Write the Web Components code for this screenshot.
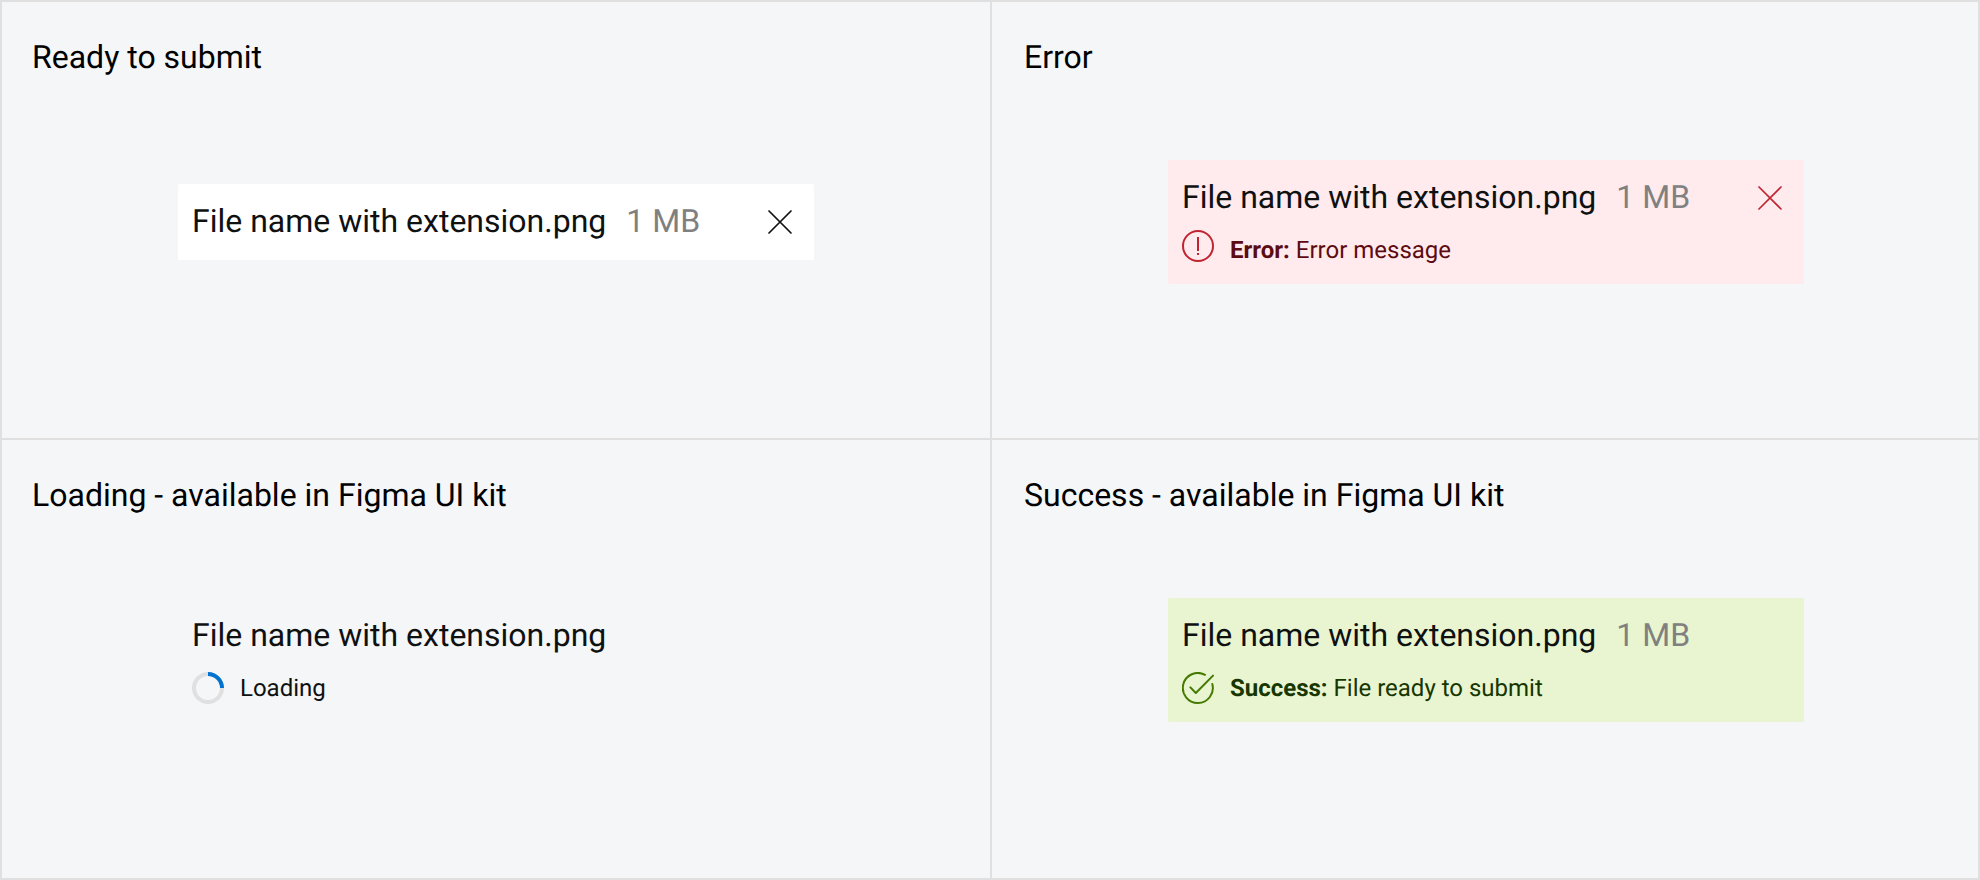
<!DOCTYPE html>
<html lang="en">
<head>
<meta charset="utf-8">
<title>File item states</title>
<style>
  body { margin: 0; font-family: Roboto, sans-serif; text-rendering: geometricPrecision; background: #f4f6f8; color: #000; }
</style>
</head>
<body>
<state-board>
  <state-cell heading="Ready to submit">
    <file-item state="ready" name="File name with extension.png" size="1 MB" removable></file-item>
  </state-cell>
  <state-cell heading="Error">
    <file-item state="error" name="File name with extension.png" size="1 MB" removable>
      <status-icon slot="icon" kind="error"></status-icon><b slot="message">Error:</b><span slot="message"> Error message</span>
    </file-item>
  </state-cell>
  <state-cell heading="Loading - available in Figma UI kit">
    <file-item state="loading" name="File name with extension.png">
      <status-icon slot="icon" kind="loading"></status-icon><span slot="message">Loading</span>
    </file-item>
  </state-cell>
  <state-cell heading="Success - available in Figma UI kit">
    <file-item state="success" name="File name with extension.png" size="1 MB">
      <status-icon slot="icon" kind="success"></status-icon><b slot="message">Success:</b><span slot="message"> File ready to submit</span>
    </file-item>
  </state-cell>
</state-board>

<script>
  class StateBoard extends HTMLElement {
    constructor() {
      super();
      this.attachShadow({ mode: 'open' }).innerHTML = `
        <style>
          :host {
            display: grid;
            box-sizing: border-box;
            min-height: 100vh;
            grid-template: auto 1fr / 1fr 1fr;
            box-shadow: inset -2px -2px #e0e0e0;
          }
        </style>
        <slot></slot>`;
    }
  }

  class StateCell extends HTMLElement {
    constructor() {
      super();
      this.attachShadow({ mode: 'open' }).innerHTML = `
        <style>
          :host {
            display: block;
            box-sizing: border-box;
            min-width: 0;
            padding: 36px 30px 154px;
            border: solid #e0e0e0;
            border-width: 2px 0 0 2px;
          }
          :host(:nth-child(even)) { padding-left: 32px; padding-right: 32px; }
          h2 { margin: 0; font-size: 32px; line-height: 38px; font-weight: 400; }
          .stage {
            display: flex;
            align-items: center;
            justify-content: center;
            min-height: 124px;
            margin-top: 84px;
          }
        </style>
        <h2></h2>
        <div class="stage"><slot></slot></div>`;
    }
    connectedCallback() {
      this.shadowRoot.querySelector('h2').textContent = this.getAttribute('heading');
    }
  }

  class FileItem extends HTMLElement {
    constructor() {
      super();
      this.attachShadow({ mode: 'open' }).innerHTML = `
        <style>
          :host {
            display: flex;
            flex-direction: column;
            gap: 16px;
            box-sizing: border-box;
            width: 100%;
            max-width: 636px;
            padding: 18px 14px;
            border-radius: 2px;
            color: #0f1111;
          }
          :host([state="ready"]) { background: #fff; }
          :host([state="error"]) { background: #ffebed; --message: #5c0b12; --accent: #bf2430; }
          :host([state="success"]) { background: #e8f5d0; --message: #173600; --accent: #447a00; }
          .head { display: flex; gap: 20px; min-height: 40px; font-size: 32px; line-height: 38px; }
          .size { color: #808080; }
          button {
            width: 40px; height: 40px; margin-left: auto; padding: 0;
            border: 0; background: none; color: var(--accent, #0f1111); cursor: pointer;
          }
          svg { display: block; }
          .status { display: flex; gap: 16px; min-height: 32px; color: var(--message, inherit); }
          .message { font-size: 24px; line-height: 32px; white-space: pre-wrap; }
          :host([state="error"]) ::slotted(status-icon) { margin-top: -4px; }
        </style>
        <div class="head"><span class="name"></span></div>`;
    }
    connectedCallback() {
      const head = this.shadowRoot.querySelector('.head');
      head.querySelector('.name').textContent = this.getAttribute('name');
      if (this.hasAttribute('size')) {
        const size = document.createElement('span');
        size.className = 'size';
        size.textContent = this.getAttribute('size');
        head.append(size);
      }
      if (this.hasAttribute('removable')) {
        head.insertAdjacentHTML('beforeend', `
          <button type="button" aria-label="Remove file">
            <svg width="40" height="40" viewBox="0 0 40 40" fill="none" stroke="currentColor" stroke-width="1.7" stroke-linecap="round" aria-hidden="true">
              <path d="M9 9l22 22M31 9l-22 22"/>
            </svg>
          </button>`);
      }
      if (this.getAttribute('state') !== 'ready') {
        head.insertAdjacentHTML('afterend',
          '<div class="status" role="status"><slot name="icon"></slot><div class="message"><slot name="message"></slot></div></div>');
      }
    }
  }

  const ICONS = {
    error: `<g fill="none" stroke="currentColor" stroke-width="2">
        <circle cx="16" cy="16" r="15"/><path d="M16 7v14M16 23v2"/></g>`,
    loading: `<g fill="none" stroke-width="4">
        <circle cx="16" cy="16" r="14" stroke="#e0e0e0"/><path d="M16 2a14 14 0 0 1 14 14" stroke="#0073d1"/></g>`,
    success: `<g fill="none" stroke="currentColor" stroke-width="2" stroke-linecap="round" stroke-linejoin="round">
        <path d="M23 2.8A15 15 0 1 0 30.3 12"/><path d="M8.4 15.4l5.4 5.6L31 3.6"/></g>`
  };

  class StatusIcon extends HTMLElement {
    connectedCallback() {
      if (this.shadowRoot) return;
      this.attachShadow({ mode: 'open' }).innerHTML = `
        <style>
          :host { display: block; flex: none; width: 32px; height: 32px; color: var(--accent, inherit); }
          svg { display: block; }
        </style>
        <svg width="32" height="32" viewBox="0 0 32 32" aria-hidden="true">${ICONS[this.getAttribute('kind')]}</svg>`;
    }
  }

  customElements.define('state-board', StateBoard);
  customElements.define('state-cell', StateCell);
  customElements.define('file-item', FileItem);
  customElements.define('status-icon', StatusIcon);
</script>
</body>
</html>
